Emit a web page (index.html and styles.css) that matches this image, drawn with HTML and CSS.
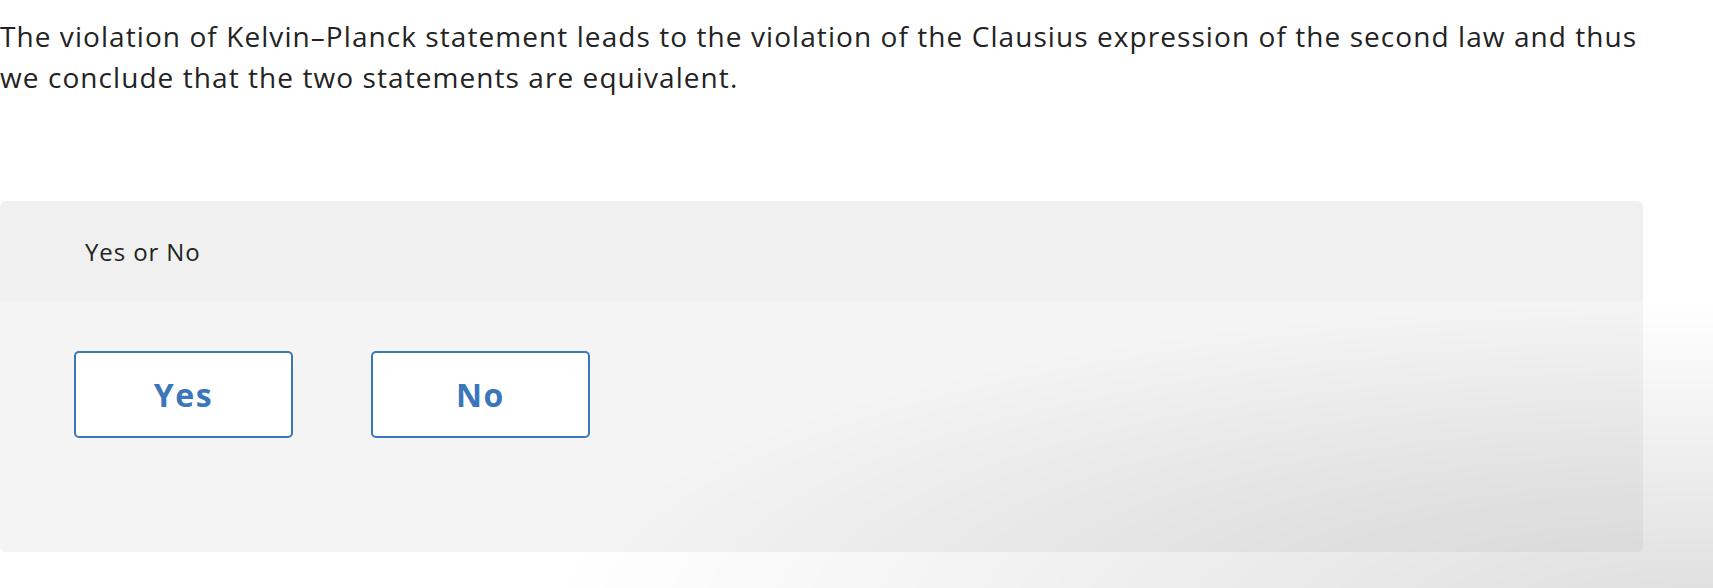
FILE: index.html
```html
<!DOCTYPE html>
<html>
<head>
<meta charset="utf-8">
<link rel="stylesheet" href="styles.css">
</head>
<body>
<div class="page">
  <p class="statement">The violation of Kelvin–Planck statement leads to the violation of the Clausius expression of the second law and thus we conclude that the two statements are equivalent.</p>
  <div class="card">
    <div class="card-head">Yes or No</div>
    <div class="card-body">
      <button class="choice">Yes</button>
      <button class="choice">No</button>
    </div>
  </div>
</div>
<div class="shade"></div>
</body>
</html>
```
FILE: styles.css
```css
html, body {
  margin: 0;
  padding: 0;
  background: #ffffff;
}
.page {
  width: 1713px;
  height: 588px;
  font-family: "Open Sans", "Liberation Sans", sans-serif;
  color: #232323;
}
.statement {
  margin: 16px 0 0 0;
  width: 1643px;
  font-size: 28px;
  letter-spacing: 1.07px;
  line-height: 41px;
}
.card {
  margin-top: 103px;
  width: 1643px;
  border-radius: 6px;
  overflow: hidden;
}
.card-head {
  height: 100px;
  background: #f0f0f0;
  display: flex;
  align-items: center;
  padding-left: 85px;
  font-size: 24px;
  letter-spacing: 0.9px;
}
.card-body {
  height: 251px;
  box-sizing: border-box;
  background: #f4f4f4;
  padding: 50px 0 0 74px;
  display: flex;
  align-items: flex-start;
  gap: 78px;
}
.choice {
  width: 219px;
  height: 87px;
  box-sizing: border-box;
  background: #ffffff;
  border: 2px solid #3b76bb;
  border-radius: 5px;
  color: #3b76bb;
  font-family: "Open Sans", "Liberation Sans", sans-serif;
  font-weight: 700;
  font-size: 32px;
  letter-spacing: 1.6px;
  padding: 0;
}
.shade {
  position: fixed;
  inset: 0;
  pointer-events: none;
  background: radial-gradient(ellipse 1150px 310px at 1700px 610px, rgba(0,0,0,0.13), rgba(0,0,0,0.06) 55%, rgba(0,0,0,0) 100%);
}
```
